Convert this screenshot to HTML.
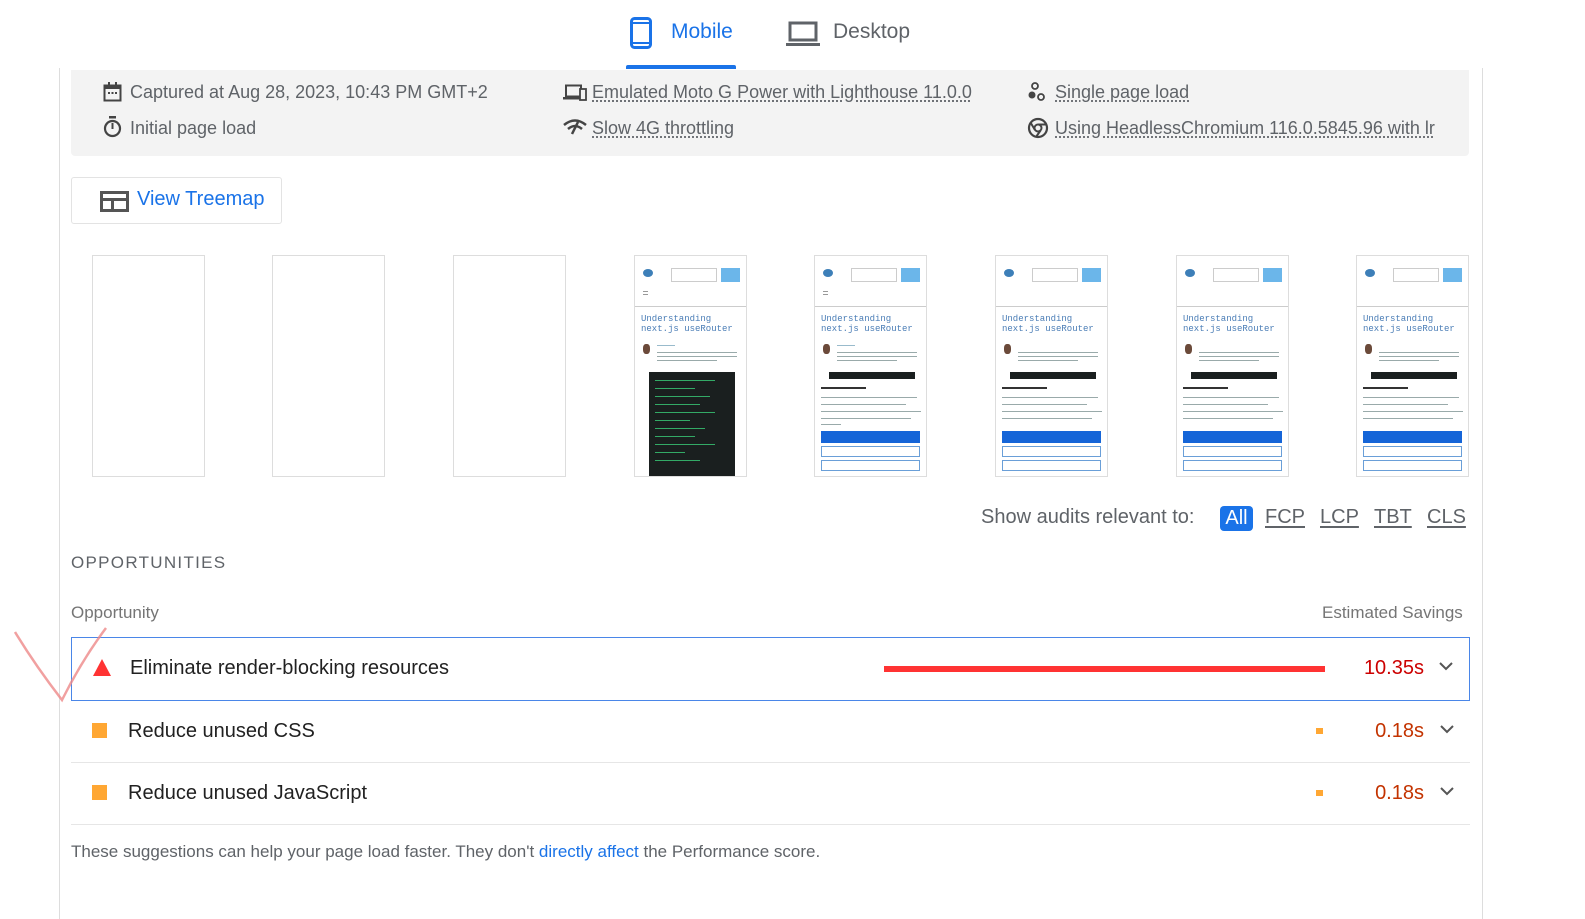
<!DOCTYPE html>
<html><head><meta charset="utf-8"><style>
*{margin:0;padding:0;box-sizing:border-box}
body{width:1585px;height:919px;background:#fff;font-family:"Liberation Sans",Arial,sans-serif;position:relative;overflow:hidden;color:#212121}
.a{position:absolute}
.vl{position:absolute;top:68px;bottom:0;width:1px;background:#ddd}
.info{left:71px;top:70px;width:1398px;height:86px;background:#f3f3f3;border-radius:0 0 4px 4px}
.it{position:absolute;font-size:18px;color:#5f6368;white-space:nowrap}
.it.u span{text-decoration:underline dotted;text-underline-offset:3px}
.ic{position:absolute}
.th{position:absolute;top:255px;width:113px;height:222px;border:1px solid #ddd;background:#fff;overflow:hidden}
.mono{font-family:"Liberation Mono",monospace}
.t-title{position:absolute;left:6px;top:58px;font-size:9px;line-height:10px;color:#4a7db6}
.ln{position:absolute;height:1px;background:#9aa}
.row{position:absolute;left:71px;width:1399px;height:62px}
.rt{position:absolute;left:57px;top:19px;font-size:20px;color:#212121}
.val{position:absolute;right:46px;top:19px;font-size:20px}
.chev{position:absolute;right:16px;top:24px}
.filt{position:absolute;top:506px;font-size:20px;color:#5f6368;text-decoration:underline;text-underline-offset:3px}
</style></head><body>

<!-- tabs -->
<svg class="a" style="left:630px;top:17px" width="22" height="32" viewBox="0 0 22 32"><rect x="1.5" y="1.5" width="19" height="29" rx="3" fill="none" stroke="#1a73e8" stroke-width="3"/><rect x="3" y="5" width="16" height="2" fill="#1a73e8"/><rect x="3" y="25" width="16" height="2" fill="#1a73e8"/></svg>
<div class="a" style="left:671px;top:20px;font-size:21px;color:#1a73e8">Mobile</div>
<div class="a" style="left:626px;top:65px;width:110px;height:4px;background:#1a73e8;border-radius:2px 2px 0 0"></div>
<svg class="a" style="left:786px;top:21px" width="34" height="26" viewBox="0 0 34 26"><rect x="4" y="2" width="26" height="17" fill="none" stroke="#5f6368" stroke-width="3"/><rect x="0" y="22" width="34" height="3" fill="#5f6368"/></svg>
<div class="a" style="left:833px;top:20px;font-size:21px;color:#5f6368">Desktop</div>

<div class="vl" style="left:59px"></div>
<div class="vl" style="left:1482px"></div>

<div class="a info"></div>
<svg class="ic" style="left:103px;top:82px" width="19" height="20" viewBox="0 0 19 20"><rect x="1.5" y="3.5" width="16" height="15" fill="none" stroke="#444" stroke-width="2"/><rect x="1" y="3" width="17" height="4" fill="#444"/><rect x="5" y="0" width="2" height="4" fill="#444"/><rect x="12" y="0" width="2" height="4" fill="#444"/><rect x="5" y="10" width="2" height="2" fill="#444"/><rect x="8.5" y="10" width="2" height="2" fill="#444"/><rect x="12" y="10" width="2" height="2" fill="#444"/></svg>
<div class="it" style="left:130px;top:82px">Captured at Aug 28, 2023, 10:43 PM GMT+2</div>
<svg class="ic" style="left:103px;top:116px" width="19" height="22" viewBox="0 0 19 22"><rect x="6" y="0" width="7" height="2.5" fill="#444"/><circle cx="9.5" cy="12.5" r="7.5" fill="none" stroke="#444" stroke-width="2.2"/><rect x="8.5" y="7" width="2" height="6" fill="#444"/></svg>
<div class="it" style="left:130px;top:118px">Initial page load</div>

<svg class="ic" style="left:563px;top:84px" width="24" height="17" viewBox="0 0 24 17"><rect x="3" y="1.5" width="15" height="11" fill="none" stroke="#444" stroke-width="2"/><rect x="0" y="13" width="18" height="2.5" fill="#444"/><rect x="17" y="5" width="6" height="11" fill="#f3f3f3" stroke="#444" stroke-width="1.8"/></svg>
<div class="it u" style="left:592px;top:82px"><span>Emulated Moto G Power with Lighthouse 11.0.0</span></div>
<svg class="ic" style="left:563px;top:119px" width="24" height="16" viewBox="0 0 24 16"><path d="M1 6 Q12 -3 23 6" fill="none" stroke="#444" stroke-width="2.5"/><path d="M5 10 Q12 4 19 10" fill="none" stroke="#444" stroke-width="2.5"/><path d="M15 3 L9 15" stroke="#444" stroke-width="2.5"/></svg>
<div class="it u" style="left:592px;top:118px"><span>Slow 4G throttling</span></div>

<svg class="ic" style="left:1027px;top:82px" width="20" height="20" viewBox="0 0 20 20"><circle cx="8" cy="4" r="3" fill="none" stroke="#444" stroke-width="1.8"/><circle cx="5" cy="13" r="3.5" fill="#444"/><circle cx="14" cy="15" r="3" fill="none" stroke="#444" stroke-width="1.8"/></svg>
<div class="it u" style="left:1055px;top:82px"><span>Single page load</span></div>
<svg class="ic" style="left:1027px;top:117px" width="22" height="22" viewBox="0 0 22 22"><circle cx="11" cy="11" r="9" fill="none" stroke="#444" stroke-width="2.2"/><circle cx="11" cy="11" r="3.5" fill="none" stroke="#444" stroke-width="2"/><path d="M11 7.5 H19.5 M8 13 L3.5 5.5 M13.5 13.5 L9 20" stroke="#444" stroke-width="2"/></svg>
<div class="it u" style="left:1055px;top:118px"><span>Using HeadlessChromium 116.0.5845.96 with lr</span></div>

<!-- treemap button -->
<div class="a" style="left:71px;top:177px;width:211px;height:47px;border:1px solid #e3e3e3;border-radius:3px"></div>
<svg class="a" style="left:100px;top:191px" width="29" height="21" viewBox="0 0 29 21"><rect x="1.5" y="1.5" width="26" height="18" fill="none" stroke="#555" stroke-width="3"/><rect x="1" y="7" width="27" height="3" fill="#555"/><rect x="11" y="8" width="3" height="12" fill="#555"/></svg>
<div class="a" style="left:137px;top:188px;font-size:20px;color:#1a73e8">View Treemap</div>

<!-- thumbnails -->
<div class="th" style="left:92px"></div>
<div class="th" style="left:272px"></div>
<div class="th" style="left:453px"></div>

<div class="th" style="left:634px">
 <div class="a" style="left:8px;top:13px;width:10px;height:8px;border-radius:50%;background:#3d7fb8"></div>
 <div class="a" style="left:36px;top:12px;width:46px;height:14px;border:1px solid #ccc"></div>
 <div class="a" style="left:86px;top:12px;width:19px;height:14px;background:#6bb6ea"></div>
 <div class="a" style="left:8px;top:35px;width:5px;height:4px;border-top:1px solid #999;border-bottom:1px solid #999"></div>
 <div class="a" style="left:0;top:50px;width:113px;height:1px;background:#ccc"></div>
 <div class="t-title mono">Understanding<br>next.js useRouter</div>
 <div class="a" style="left:8px;top:88px;width:7px;height:10px;border-radius:40%;background:#6b4a3a"></div>
 <div class="ln" style="left:22px;top:89px;width:18px;background:#9bc"></div>
 <div class="ln" style="left:22px;top:96px;width:80px"></div><div class="ln" style="left:22px;top:100px;width:80px"></div><div class="ln" style="left:22px;top:104px;width:60px"></div>
 <div class="a" style="left:14px;top:116px;width:86px;height:110px;background:#1a1f1f"></div>
 <div class="ln" style="left:20px;top:124px;width:60px;background:#3a6"></div><div class="ln" style="left:20px;top:132px;width:40px;background:#3a6"></div><div class="ln" style="left:20px;top:140px;width:55px;background:#3a6"></div><div class="ln" style="left:20px;top:148px;width:45px;background:#3a6"></div><div class="ln" style="left:20px;top:156px;width:60px;background:#3a6"></div><div class="ln" style="left:20px;top:164px;width:35px;background:#3a6"></div><div class="ln" style="left:20px;top:172px;width:50px;background:#3a6"></div><div class="ln" style="left:20px;top:180px;width:40px;background:#3a6"></div><div class="ln" style="left:20px;top:188px;width:60px;background:#3a6"></div><div class="ln" style="left:20px;top:196px;width:30px;background:#3a6"></div><div class="ln" style="left:20px;top:204px;width:45px;background:#3a6"></div>
</div>

<!-- cookie thumbs -->
<div id="tpl" class="th" style="left:814px">
 <div class="a" style="left:8px;top:13px;width:10px;height:8px;border-radius:50%;background:#3d7fb8"></div>
 <div class="a" style="left:36px;top:12px;width:46px;height:14px;border:1px solid #ccc"></div>
 <div class="a" style="left:86px;top:12px;width:19px;height:14px;background:#6bb6ea"></div>
 <div class="a" style="left:8px;top:35px;width:5px;height:4px;border-top:1px solid #999;border-bottom:1px solid #999"></div>
 <div class="a" style="left:0;top:50px;width:113px;height:1px;background:#ccc"></div>
 <div class="t-title mono">Understanding<br>next.js useRouter</div>
 <div class="a" style="left:8px;top:88px;width:7px;height:10px;border-radius:40%;background:#6b4a3a"></div>
 <div class="ln" style="left:22px;top:89px;width:18px;background:#9bc"></div>
 <div class="ln" style="left:22px;top:96px;width:80px"></div><div class="ln" style="left:22px;top:100px;width:80px"></div><div class="ln" style="left:22px;top:104px;width:60px"></div>
 <div class="a" style="left:14px;top:116px;width:86px;height:7px;background:#1a1f1f"></div>
 <div class="ln" style="left:6px;top:131px;width:45px;height:2px;background:#333"></div>
 <div class="ln" style="left:6px;top:141px;width:96px"></div><div class="ln" style="left:6px;top:148px;width:85px"></div><div class="ln" style="left:6px;top:155px;width:100px"></div><div class="ln" style="left:6px;top:162px;width:90px"></div><div class="ln" style="left:6px;top:168px;width:20px"></div>
 <div class="a" style="left:6px;top:175px;width:99px;height:12px;background:#1565d8"></div>
 <div class="a" style="left:6px;top:190px;width:99px;height:11px;border:1px solid #6a9fd8"></div>
 <div class="a" style="left:6px;top:204px;width:99px;height:11px;border:1px solid #6a9fd8"></div>
</div>
<div class="th" style="left:995px"><div class="a" style="left:8px;top:13px;width:10px;height:8px;border-radius:50%;background:#3d7fb8"></div><div class="a" style="left:36px;top:12px;width:46px;height:14px;border:1px solid #ccc"></div><div class="a" style="left:86px;top:12px;width:19px;height:14px;background:#6bb6ea"></div><div class="a" style="left:0;top:50px;width:113px;height:1px;background:#ccc"></div><div class="t-title mono">Understanding<br>next.js useRouter</div><div class="a" style="left:8px;top:88px;width:7px;height:10px;border-radius:40%;background:#6b4a3a"></div><div class="ln" style="left:22px;top:96px;width:80px"></div><div class="ln" style="left:22px;top:100px;width:80px"></div><div class="ln" style="left:22px;top:104px;width:60px"></div><div class="a" style="left:14px;top:116px;width:86px;height:7px;background:#1a1f1f"></div><div class="ln" style="left:6px;top:131px;width:45px;height:2px;background:#333"></div><div class="ln" style="left:6px;top:141px;width:96px"></div><div class="ln" style="left:6px;top:148px;width:85px"></div><div class="ln" style="left:6px;top:155px;width:100px"></div><div class="ln" style="left:6px;top:162px;width:90px"></div><div class="a" style="left:6px;top:175px;width:99px;height:12px;background:#1565d8"></div><div class="a" style="left:6px;top:190px;width:99px;height:11px;border:1px solid #6a9fd8"></div><div class="a" style="left:6px;top:204px;width:99px;height:11px;border:1px solid #6a9fd8"></div></div>
<div class="th" style="left:1176px"><div class="a" style="left:8px;top:13px;width:10px;height:8px;border-radius:50%;background:#3d7fb8"></div><div class="a" style="left:36px;top:12px;width:46px;height:14px;border:1px solid #ccc"></div><div class="a" style="left:86px;top:12px;width:19px;height:14px;background:#6bb6ea"></div><div class="a" style="left:0;top:50px;width:113px;height:1px;background:#ccc"></div><div class="t-title mono">Understanding<br>next.js useRouter</div><div class="a" style="left:8px;top:88px;width:7px;height:10px;border-radius:40%;background:#6b4a3a"></div><div class="ln" style="left:22px;top:96px;width:80px"></div><div class="ln" style="left:22px;top:100px;width:80px"></div><div class="ln" style="left:22px;top:104px;width:60px"></div><div class="a" style="left:14px;top:116px;width:86px;height:7px;background:#1a1f1f"></div><div class="ln" style="left:6px;top:131px;width:45px;height:2px;background:#333"></div><div class="ln" style="left:6px;top:141px;width:96px"></div><div class="ln" style="left:6px;top:148px;width:85px"></div><div class="ln" style="left:6px;top:155px;width:100px"></div><div class="ln" style="left:6px;top:162px;width:90px"></div><div class="a" style="left:6px;top:175px;width:99px;height:12px;background:#1565d8"></div><div class="a" style="left:6px;top:190px;width:99px;height:11px;border:1px solid #6a9fd8"></div><div class="a" style="left:6px;top:204px;width:99px;height:11px;border:1px solid #6a9fd8"></div></div>
<div class="th" style="left:1356px"><div class="a" style="left:8px;top:13px;width:10px;height:8px;border-radius:50%;background:#3d7fb8"></div><div class="a" style="left:36px;top:12px;width:46px;height:14px;border:1px solid #ccc"></div><div class="a" style="left:86px;top:12px;width:19px;height:14px;background:#6bb6ea"></div><div class="a" style="left:0;top:50px;width:113px;height:1px;background:#ccc"></div><div class="t-title mono">Understanding<br>next.js useRouter</div><div class="a" style="left:8px;top:88px;width:7px;height:10px;border-radius:40%;background:#6b4a3a"></div><div class="ln" style="left:22px;top:96px;width:80px"></div><div class="ln" style="left:22px;top:100px;width:80px"></div><div class="ln" style="left:22px;top:104px;width:60px"></div><div class="a" style="left:14px;top:116px;width:86px;height:7px;background:#1a1f1f"></div><div class="ln" style="left:6px;top:131px;width:45px;height:2px;background:#333"></div><div class="ln" style="left:6px;top:141px;width:96px"></div><div class="ln" style="left:6px;top:148px;width:85px"></div><div class="ln" style="left:6px;top:155px;width:100px"></div><div class="ln" style="left:6px;top:162px;width:90px"></div><div class="a" style="left:6px;top:175px;width:99px;height:12px;background:#1565d8"></div><div class="a" style="left:6px;top:190px;width:99px;height:11px;border:1px solid #6a9fd8"></div><div class="a" style="left:6px;top:204px;width:99px;height:11px;border:1px solid #6a9fd8"></div></div>

<!-- filter -->
<div class="a" style="left:981px;top:506px;font-size:20px;color:#5f6368">Show audits relevant to:</div>
<div class="a" style="left:1220px;top:506px;width:33px;height:25px;background:#1a73e8;border-radius:4px;color:#fff;font-size:20px;text-align:center;line-height:25px">All</div>
<div class="filt" style="left:1265px">FCP</div>
<div class="filt" style="left:1320px">LCP</div>
<div class="filt" style="left:1374px">TBT</div>
<div class="filt" style="left:1427px">CLS</div>

<div class="a" style="left:71px;top:553px;font-size:17px;letter-spacing:1.3px;color:#5f6368">OPPORTUNITIES</div>
<div class="a" style="left:71px;top:603px;font-size:17px;color:#757575">Opportunity</div>
<div class="a" style="left:1322px;top:603px;font-size:17px;color:#757575">Estimated Savings</div>

<!-- rows -->
<div class="row" style="top:637px;height:64px;border:1.5px solid #4a86e8">
 <svg class="a" style="left:21px;top:21px" width="18" height="17" viewBox="0 0 18 17"><path d="M9 0 L18 17 H0Z" fill="#f33"/></svg>
 <div class="rt" style="left:58px;top:19px">Eliminate render-blocking resources</div>
 <div class="a" style="left:812px;top:28px;width:441px;height:6px;background:#f33"></div>
 <div class="val" style="color:#c00;right:45px">10.35s</div>
 <svg class="chev" width="14" height="9" viewBox="0 0 14 9"><path d="M1 1 L7 7 L13 1" fill="none" stroke="#555" stroke-width="2"/></svg>
</div>
<div class="row" style="top:701px">
 <div class="a" style="left:21px;top:22px;width:15px;height:15px;background:#ffa733"></div>
 <div class="rt">Reduce unused CSS</div>
 <div class="a" style="left:1245px;top:27px;width:7px;height:6px;background:#ffa733"></div>
 <div class="val" style="color:#c33300">0.18s</div>
 <svg class="chev" width="14" height="9" viewBox="0 0 14 9"><path d="M1 1 L7 7 L13 1" fill="none" stroke="#555" stroke-width="2"/></svg>
 <div class="a" style="left:0;bottom:0;width:1399px;height:1px;background:#e6e6e6"></div>
</div>
<div class="row" style="top:763px">
 <div class="a" style="left:21px;top:22px;width:15px;height:15px;background:#ffa733"></div>
 <div class="rt">Reduce unused JavaScript</div>
 <div class="a" style="left:1245px;top:27px;width:7px;height:6px;background:#ffa733"></div>
 <div class="val" style="color:#c33300">0.18s</div>
 <svg class="chev" width="14" height="9" viewBox="0 0 14 9"><path d="M1 1 L7 7 L13 1" fill="none" stroke="#555" stroke-width="2"/></svg>
 <div class="a" style="left:0;bottom:0;width:1399px;height:1px;background:#e6e6e6"></div>
</div>

<div class="a" style="left:71px;top:842px;font-size:17px;color:#5f6368">These suggestions can help your page load faster. They don't <span style="color:#1a73e8">directly affect</span> the Performance score.</div>

<!-- red check mark -->
<svg class="a" style="left:10px;top:620px" width="100" height="90" viewBox="0 0 100 90"><path d="M5 12 Q25 45 52 80 Q72 40 96 8" fill="none" stroke="#e88" stroke-width="2.5" opacity="0.8"/></svg>
</body></html>
